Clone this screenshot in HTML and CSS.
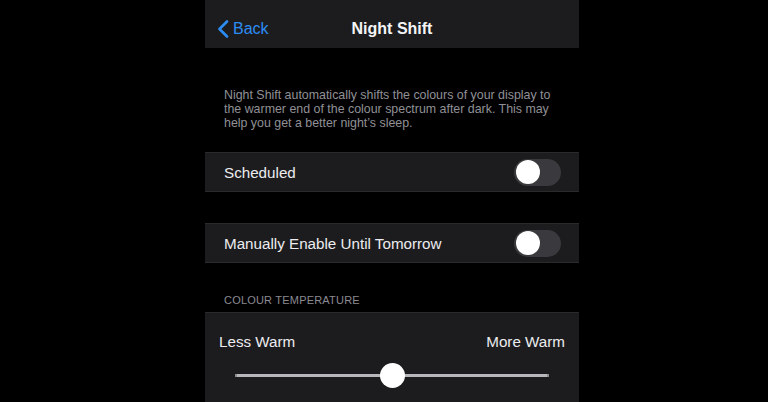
FILE: index.html
```html
<!DOCTYPE html>
<html lang="en">
<head>
    <meta charset="UTF-8">
    <meta name="viewport" content="width=device-width, initial-scale=1.0">
    <title>Night Shift</title>
    <link rel="stylesheet" href="styles.css">
</head>
<body>
    <div class="screen">
        <!-- Navigation bar -->
        <header class="nav">
            <a class="back" href="#">
                <svg width="12" height="18" viewBox="0 0 12 18"><path d="M10 1.5 L2.5 9 L10 16.5" fill="none" stroke="#2c8cf4" stroke-width="2.6" stroke-linecap="round" stroke-linejoin="round"/></svg>
                <span>Back</span>
            </a>
            <h1 class="title">Night Shift</h1>
        </header>

        <p class="intro">Night Shift automatically shifts the colours of your display to the warmer end of the colour spectrum after dark. This may help you get a better night’s sleep.</p>

        <section class="row first">
            <span class="label">Scheduled</span>
            <span class="toggle"><span class="knob"></span></span>
        </section>

        <section class="row second">
            <span class="label">Manually Enable Until Tomorrow</span>
            <span class="toggle"><span class="knob"></span></span>
        </section>

        <h2 class="group-title">COLOUR TEMPERATURE</h2>

        <section class="slider-card">
            <div class="slider-labels">
                <span>Less Warm</span>
                <span>More Warm</span>
            </div>
            <div class="slider">
                <div class="track"></div>
                <div class="thumb"></div>
            </div>
        </section>
    </div>
</body>
</html>
```

FILE: styles.css
```css
/* Night Shift settings screen */
body {
    margin: 0;
    background-color: #000;
    font-family: "Liberation Sans", Arial, sans-serif;
    color: #ececf0;
    overflow: hidden;
}

.screen {
    width: 374px;
    margin-left: 205px;
    height: 402px;
}

.nav {
    position: relative;
    height: 48px;
    box-sizing: border-box;
    padding-top: 9px;
    background-color: #1c1c1e;
    display: flex;
    align-items: center;
    justify-content: center;
}

.back {
    position: absolute;
    left: 12px;
    top: 9px;
    bottom: 0;
    display: flex;
    align-items: center;
    gap: 4px;
    color: #2c8cf4;
    text-decoration: none;
    font-size: 16px;
}

.title {
    margin: 0;
    font-size: 16px;
    font-weight: bold;
    color: #f4f4f6;
}

.intro {
    margin: 40px 0 0;
    padding: 0 14px 0 19px;
    font-size: 12.4px;
    line-height: 14px;
    color: #909096;
}

.row {
    height: 38px;
    background-color: #1c1c1e;
    border-top: 1px solid #2a2a2c;
    border-bottom: 1px solid #2a2a2c;
    display: flex;
    align-items: center;
    justify-content: space-between;
    padding: 0 18px 0 19px;
}

.row.first {
    margin-top: 22px;
}

.row.second {
    margin-top: 31px;
}

.label {
    font-size: 15.2px;
}

.toggle {
    width: 47px;
    height: 27px;
    border-radius: 14px;
    background-color: #3a3a3e;
    display: flex;
    align-items: center;
    padding-left: 2px;
    box-sizing: border-box;
}

.knob {
    width: 24px;
    height: 24px;
    border-radius: 50%;
    background-color: #fff;
}

.group-title {
    margin: 0;
    padding: 31px 0 0 19px;
    height: 18px;
    font-size: 11px;
    font-weight: normal;
    color: #8a8a90;
    letter-spacing: 0.2px;
}

.slider-card {
    height: 100px;
    background-color: #1c1c1e;
    border-top: 1px solid #2a2a2c;
    padding: 0 14px;
}

.slider-labels {
    display: flex;
    justify-content: space-between;
    padding-top: 20px;
    font-size: 15.2px;
    line-height: 18px;
}

.slider {
    position: relative;
    height: 30px;
    margin: 9px 16px 0;
}

.track {
    position: absolute;
    left: 0;
    right: 0;
    top: 14px;
    height: 3px;
    background-color: #b8b8bc;
    border-left: 2px solid #8e8e92;
    border-right: 2px solid #8e8e92;
}

.thumb {
    position: absolute;
    left: 145px;
    top: 3px;
    width: 25px;
    height: 25px;
    border-radius: 50%;
    background-color: #fff;
}
```
